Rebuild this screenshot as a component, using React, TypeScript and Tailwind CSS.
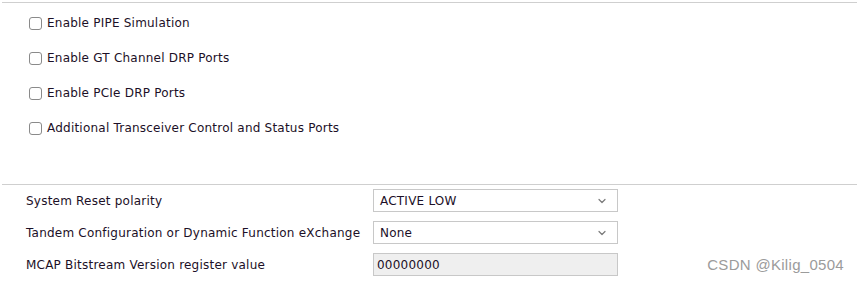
import { ChevronDown } from "lucide-react";

const options = [
  "Enable PIPE Simulation",
  "Enable GT Channel DRP Ports",
  "Enable PCIe DRP Ports",
  "Additional Transceiver Control and Status Ports",
];

export default function App() {
  return (
    <main className="relative h-[282px] w-[860px] bg-white font-['DejaVu_Sans',sans-serif] text-[12px] tracking-[0.22px] text-[#1c1027]">
      <div className="ml-[2px] mr-[3px] mt-[2px] h-px bg-[#cfcfcf]" />

      <div className="flex flex-col gap-[19px] pl-[29px] pt-[12px]">
        {options.map((label) => (
          <label key={label} className="flex h-4 items-center gap-[5px]">
            <span className="h-[13px] w-[13px] rounded-[3px] border border-[#8a8a8a] bg-white" />
            <span>{label}</span>
          </label>
        ))}
      </div>

      <div className="ml-[2px] mr-[3px] mt-[48px] h-px bg-[#cfcfcf]" />

      <div className="flex flex-col gap-[9px] pl-[26px] pt-[4px]">
        <Row label="System Reset polarity">
          <Select value="ACTIVE LOW" />
        </Row>
        <Row label="Tandem Configuration or Dynamic Function eXchange">
          <Select value="None" />
        </Row>
        <Row label="MCAP Bitstream Version register value">
          <div className="flex h-[23px] w-[245px] items-center border border-[#c8c8c8] bg-[#efefef] pl-[3px]">
            00000000
          </div>
        </Row>
      </div>

      <span className="absolute bottom-[8px] right-[16px] font-['Liberation_Sans',sans-serif] text-[15px] tracking-[0.3px] text-[#9b9b9b]">
        CSDN @Kilig_0504
      </span>
    </main>
  );
}

function Row({ label, children }: { label: string; children: React.ReactNode }) {
  return (
    <div className="flex items-center">
      <span className="w-[347px]">{label}</span>
      {children}
    </div>
  );
}

function Select({ value }: { value: string }) {
  return (
    <div className="flex h-[23px] w-[245px] items-center justify-between border border-[#c8c8c8] bg-white pl-[6px] pr-[9px]">
      <span>{value}</span>
      <ChevronDown className="h-3 w-3 text-[#7a7a7a]" strokeWidth={2.4} />
    </div>
  );
}
